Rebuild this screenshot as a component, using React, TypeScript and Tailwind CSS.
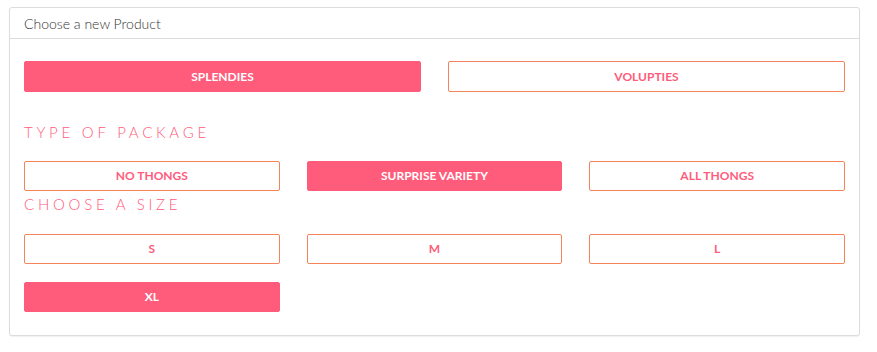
import React, { useState } from "react";

const font = { fontFamily: "Lato, 'Open Sans', sans-serif" };

function OptionButton({
  label,
  active,
  onClick,
  className = "",
}: {
  label: string;
  active: boolean;
  onClick: () => void;
  className?: string;
}) {
  return (
    <button
      type="button"
      onClick={onClick}
      className={`flex h-[30px] items-center justify-center rounded-[2px] border text-[12px] font-bold uppercase ${
        active
          ? "border-[#ff5c7c] bg-[#ff5c7c] text-white"
          : "border-[#f4845a] bg-white text-[#ff5c7c]"
      } ${className}`}
    >
      {label}
    </button>
  );
}

export default function App() {
  const [product, setProduct] = useState("SPLENDIES");
  const [pack, setPack] = useState("SURPRISE VARIETY");
  const [size, setSize] = useState("XL");

  return (
    <div className="min-h-[352px] w-[877px] bg-white pl-[9px] pt-[7px]" style={font}>
      {/* card */}
      <div className="w-[851px] rounded-[3px] border border-[#dcdcdc] bg-white shadow-[0_1px_1px_rgba(0,0,0,0.06)]">
        <div className="flex h-[31px] items-center border-b border-[#dcdcdc] px-[14px] text-[14px] font-light text-[#333]">
          Choose a new Product
        </div>

        <div className="px-[14px] pb-[23px] pt-[22px]">
          <div className="grid grid-cols-2 gap-[27px]">
            {["SPLENDIES", "VOLUPTIES"].map((p) => (
              <OptionButton
                key={p}
                label={p}
                active={product === p}
                onClick={() => setProduct(p)}
                className="h-[31px]"
              />
            ))}
          </div>

          <h3 className="mt-[30px] text-[15px] font-light leading-[20px] tracking-[3.75px] text-[#ff5c7c]">
            TYPE OF PACKAGE
          </h3>
          <div className="mt-[19px] grid grid-cols-3 gap-[27px]">
            {["NO THONGS", "SURPRISE VARIETY", "ALL THONGS"].map((p) => (
              <OptionButton key={p} label={p} active={pack === p} onClick={() => setPack(p)} />
            ))}
          </div>

          <h3 className="mt-[3px] text-[15px] font-light leading-[20px] tracking-[3.75px] text-[#ff5c7c]">
            CHOOSE A SIZE
          </h3>
          <div className="mt-[20px] grid grid-cols-3 gap-x-[27px] gap-y-[18px]">
            {["S", "M", "L", "XL"].map((s) => (
              <OptionButton key={s} label={s} active={size === s} onClick={() => setSize(s)} />
            ))}
          </div>
        </div>
      </div>
    </div>
  );
}
